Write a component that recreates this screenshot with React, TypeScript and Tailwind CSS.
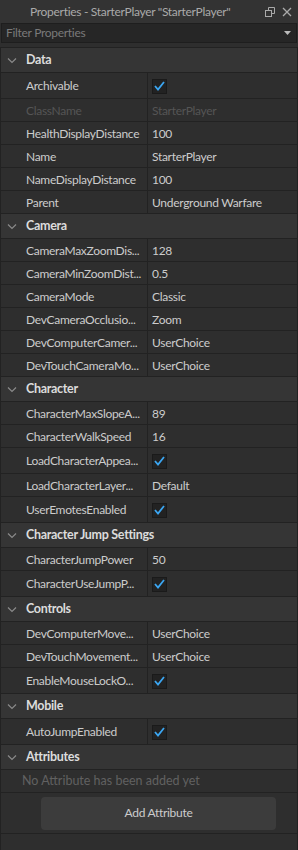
import React from 'react'

type Prop = {
  name: string
  value?: string
  check?: boolean
  disabled?: boolean
}

type Section = {
  title: string
  props: Prop[]
}

const sections: Section[] = [
  {
    title: 'Data',
    props: [
      { name: 'Archivable', check: true },
      { name: 'ClassName', value: 'StarterPlayer', disabled: true },
      { name: 'HealthDisplayDistance', value: '100' },
      { name: 'Name', value: 'StarterPlayer' },
      { name: 'NameDisplayDistance', value: '100' },
      { name: 'Parent', value: 'Underground Warfare' },
    ],
  },
  {
    title: 'Camera',
    props: [
      { name: 'CameraMaxZoomDis...', value: '128' },
      { name: 'CameraMinZoomDist...', value: '0.5' },
      { name: 'CameraMode', value: 'Classic' },
      { name: 'DevCameraOcclusio...', value: 'Zoom' },
      { name: 'DevComputerCamer...', value: 'UserChoice' },
      { name: 'DevTouchCameraMo...', value: 'UserChoice' },
    ],
  },
  {
    title: 'Character',
    props: [
      { name: 'CharacterMaxSlopeA...', value: '89' },
      { name: 'CharacterWalkSpeed', value: '16' },
      { name: 'LoadCharacterAppea...', check: true },
      { name: 'LoadCharacterLayer...', value: 'Default' },
      { name: 'UserEmotesEnabled', check: true },
    ],
  },
  {
    title: 'Character Jump Settings',
    props: [
      { name: 'CharacterJumpPower', value: '50' },
      { name: 'CharacterUseJumpP...', check: true },
    ],
  },
  {
    title: 'Controls',
    props: [
      { name: 'DevComputerMove...', value: 'UserChoice' },
      { name: 'DevTouchMovement...', value: 'UserChoice' },
      { name: 'EnableMouseLockO...', check: true },
    ],
  },
  {
    title: 'Mobile',
    props: [{ name: 'AutoJumpEnabled', check: true }],
  },
]

function Chevron() {
  return (
    <svg width="10" height="6" viewBox="0 0 10 6" className="shrink-0">
      <path d="M1 0.5 L5 4.5 L9 0.5" fill="none" stroke="#8a8a8a" strokeWidth="1.2" />
    </svg>
  )
}

function Checkbox() {
  return (
    <div className="w-[15px] h-[15px] bg-[#222222] border border-[#1a1a1a] flex items-center justify-center">
      <svg width="11" height="10" viewBox="0 0 11 10">
        <path d="M1 5 L4 8.5 L10 1" fill="none" stroke="#3ba6f2" strokeWidth="1.8" />
      </svg>
    </div>
  )
}

function SectionHeader({ title }: { title: string }) {
  return (
    <div className="h-[25px] flex items-center bg-[#353535] border-b border-[#222222] pl-[6px] pt-[1px]">
      <Chevron />
      <span className="ml-[9px] text-[12.5px] font-bold text-[#dcdcdc]">{title}</span>
    </div>
  )
}

function PropRow({ prop }: { prop: Prop }) {
  const color = prop.disabled ? 'text-[#555555]' : 'text-[#cccccc]'
  return (
    <div className={`flex border-b border-[#222222] ${prop.check ? 'h-[26px]' : 'h-[23px]'}`}>
      <div
        className={`w-[147px] shrink-0 border-r border-[#222222] pl-[25px] pt-[1px] flex items-center whitespace-nowrap overflow-hidden ${color}`}
      >
        {prop.name}
      </div>
      <div className={`flex-1 pl-[4px] pt-[1px] flex items-center whitespace-nowrap overflow-hidden ${color}`}>
        {prop.check ? <Checkbox /> : prop.value}
      </div>
    </div>
  )
}

export default function App() {
  return (
    <div className="w-[298px] h-[850px] bg-[#2e2e2e] flex flex-col overflow-hidden text-[12px] tracking-[-0.3px] font-['Lato',sans-serif]">
      {/* title bar */}
      <div className="h-[23px] shrink-0 flex items-center bg-[#333333]">
        <span className="pl-[30px] text-[12px] text-[#aaaaaa] whitespace-nowrap">
          Properties - StarterPlayer "StarterPlayer"
        </span>
        <div className="ml-auto flex items-center gap-[7px] pr-[6px]">
          <svg width="10" height="10" viewBox="0 0 10 10">
            <rect x="0.5" y="3.5" width="6" height="6" fill="none" stroke="#aaaaaa" />
            <path d="M3.5 3.5 V0.5 H9.5 V6.5 H6.5" fill="none" stroke="#aaaaaa" />
          </svg>
          <svg width="10" height="10" viewBox="0 0 10 10">
            <path d="M1 1 L9 9 M9 1 L1 9" stroke="#aaaaaa" strokeWidth="1.3" />
          </svg>
        </div>
      </div>

      {/* filter */}
      <div className="h-[20px] shrink-0 mx-[1px] bg-[#262626] border border-[#1e1e1e] flex items-center pl-[4px] pr-[5px]">
        <span className="text-[#7a7a7a] text-[12px]">Filter Properties</span>
        <svg width="7" height="4" viewBox="0 0 7 4" className="ml-auto">
          <path d="M0 0 H7 L3.5 4 Z" fill="#bbbbbb" />
        </svg>
      </div>

      <div className="h-[4px] shrink-0" />

      {/* property list */}
      <div className="flex-1 flex flex-col border-t border-x border-[#222222]">
        {sections.map((s) => (
          <div key={s.title}>
            <SectionHeader title={s.title} />
            {s.props.map((p) => (
              <PropRow key={p.name} prop={p} />
            ))}
          </div>
        ))}

        <SectionHeader title="Attributes" />
        <div className="h-[23px] border-b border-[#222222] pl-[21px] pt-[1px] flex items-center text-[12.5px] tracking-normal text-[#616161]">
          No Attribute has been added yet
        </div>
        <div className="h-[41px] border-b border-[#222222] flex items-center pl-[40px] pr-[20px]">
          <button className="w-[235px] h-[33px] rounded-[4px] bg-[#3c3c3c] text-[#cccccc] text-[12px] tracking-[-0.3px]">
            Add Attribute
          </button>
        </div>
      </div>
    </div>
  )
}
